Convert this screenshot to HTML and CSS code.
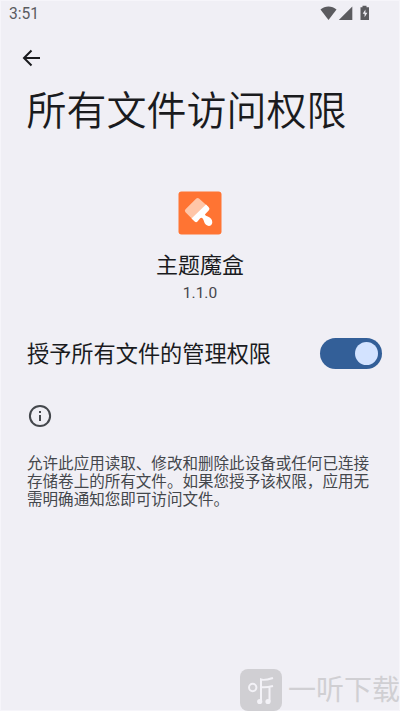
FILE: index.html
```html
<!DOCTYPE html>
<html lang="zh-CN">
<head>
<meta charset="utf-8">
<title>所有文件访问权限</title>
<link rel="stylesheet" href="styles.css">
</head>
<body>
<div class="screen">
  <header class="status">
    <span class="time">3:51</span>
    <svg class="status-icons" width="52" height="18" viewBox="0 0 52 18">
      <path d="M.5 4.500C5 .5 12 .5 16.500 4.500L8.500 15z"/>
      <path d="M32.300 1.500v13.500H18.800z"/>
      <path d="M42.500.8h4v1.400H49V15h-8.500V2.200h2z"/>
      <path class="bolt" d="M45.400 4.500l-2.700 4.300h1.900v3.400l2.800-4.500h-2z"/>
    </svg>
  </header>
  <svg class="back" width="20" height="18" viewBox="0 0 20 18"><path d="M18 9H2M9.500 1.500L2 9l7.500 7.500"/></svg>
  <h1 class="title">所有文件访问权限</h1>
  <section class="app">
    <svg class="app-icon" width="44" height="44" viewBox="0 0 44 44">
      <rect x=".5" y=".5" width="43" height="43" rx="3" fill="#ff7433"/>
      <path d="M7.500 18.200L18.300 7.600q1.400-1.200 2.700 0l9.500 8.500L17.500 31.200l-10-10q-1.400-1.600 0-3z" fill="#ffc6a8"/>
      <path d="M28 13.500l2.700 2.700q1.500 1.400.2 3.100l-4 4.200q.5 1.700 2.900 2 4.300 1.500 4.500 5.700c0 3.500-3.700 4.800-6.300 2.600-2.300-2-1.800-4.600-3.300-6.400q-1.300-1-2.500-.2L19.500 30.500q-1.300 1.300-2.700 0l-3.300-3z" fill="#fff"/>
    </svg>
    <div class="app-name">主题魔盒</div>
    <div class="version">1.1.0</div>
  </section>
  <section class="grant">
    <span class="grant-label">授予所有文件的管理权限</span>
    <span class="switch"><span class="thumb"></span></span>
  </section>
  <svg class="info" width="24" height="24" viewBox="0 0 24 24"><circle cx="12" cy="12" r="10.100"/><path d="M12 11v6M12 6.900v2.200"/></svg>
  <p class="desc">允许此应用读取、修改和删除此设备或任何已连接<br>存储卷上的所有文件。如果您授予该权限，应用无<br>需明确通知您即可访问文件。</p>
  <footer class="brand">
    <svg width="42" height="42" viewBox="0 0 42 42">
      <rect width="42" height="42" rx="8" fill="#d0cfd3"/>
      <g fill="none" stroke="#f3f2f7" stroke-width="2"><circle cx="12.700" cy="18.500" r="3.700"/><path d="M21 32V10.500q3 1.200 12-1.500M21 18q4 1 12-1M29.500 18v14.500"/></g>
      <g fill="#f3f2f7"><circle cx="19.700" cy="32.500" r="2.600"/><circle cx="28" cy="32.500" r="2.600"/></g>
    </svg>
    <span class="brand-name">一听下载</span>
  </footer>
</div>
</body>
</html>
```
FILE: styles.css
```css
* { box-sizing: border-box; }
body { margin: 0; background: #f0eff5; font-family: Roboto, "Noto Sans CJK SC", sans-serif; }
.screen { width: 400px; height: 711px; display: flex; flex-direction: column; overflow: hidden; color: #1a1b1e; box-shadow: inset 0 0 0 1px #f6f5fa; }
.status { display: flex; justify-content: space-between; height: 28px; padding: 5px 28px 0 9px; color: #5b5b5f; }
.time { font-size: 15.600px; line-height: 19px; }
.status-icons { fill: #5b5b5f; }
.status-icons .bolt { fill: #f0eff5; }
.back { margin: 21px 0 0 22px; fill: none; stroke: #1a1b1e; stroke-width: 2; flex: none; }
.title { margin: 15px 0 0 26.500px; font-size: 40px; line-height: 60px; font-weight: 350; white-space: nowrap; }
.app { display: flex; flex-direction: column; align-items: center; margin-top: 49px; }
.app-name { font-size: 22px; line-height: 32px; margin-top: 15px; }
.version { font-size: 15.500px; line-height: 20px; margin-top: 1px; color: #46464b; }
.grant { display: flex; align-items: center; justify-content: space-between; margin-top: 34px; padding: 0 18px 0 27px; height: 32px; }
.grant-label { font-size: 22.200px; line-height: 32px; padding-top: 1px; }
.switch { width: 62px; height: 31px; border-radius: 16px; background: #335f98; display: flex; align-items: center; justify-content: flex-end; padding-right: 4px; }
.thumb { width: 23px; height: 23px; border-radius: 50%; background: #d3e3ff; }
.info { margin: 35px 0 0 28px; flex: none; fill: none; stroke: #44474c; stroke-width: 2; }
.desc { margin: 27px 0 0 27px; font-size: 15.550px; line-height: 18px; color: #44474c; white-space: nowrap; }
.brand { display: flex; align-items: center; gap: 6px; margin: auto 0 0 240px; height: 42px; color: #d0cfd3; flex: none; }
.brand svg { flex: none; }
.brand-name { font-size: 28px; line-height: 42px; padding-top: 2px; white-space: nowrap; }
```
